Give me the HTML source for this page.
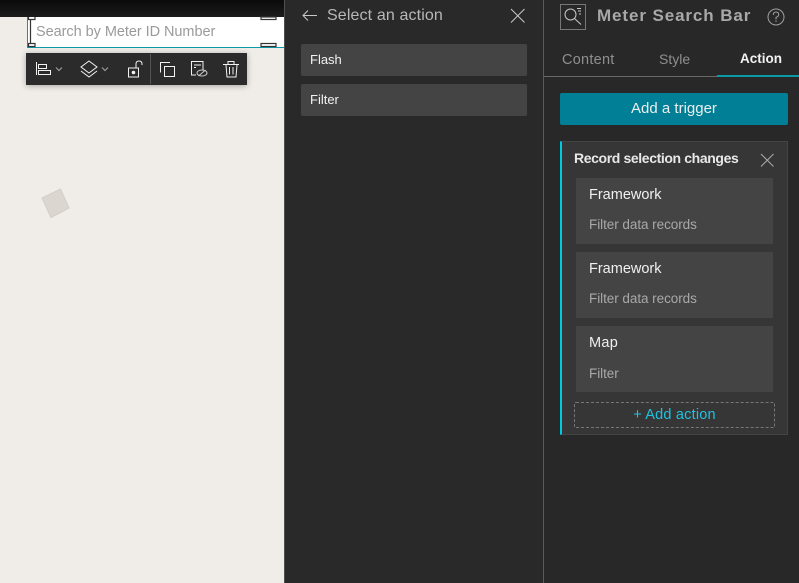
<!DOCTYPE html>
<html><head><meta charset="utf-8">
<style>
html,body{margin:0;padding:0;width:799px;height:583px;overflow:hidden;background:#282828;font-family:"Liberation Sans",sans-serif}
div{position:absolute;box-sizing:border-box;white-space:nowrap}
svg{position:absolute;overflow:visible}
.card{left:576px;width:197px;height:66px;background:#444}
.t{left:589px;font-size:14.500px;color:#f0f0f0;line-height:18px}
.s{left:589px;font-size:13.500px;color:#a8a8a8;line-height:18px;letter-spacing:-.05px}
</style></head><body>
<div style="left:0;top:0;width:284px;height:583px;background:#f0ede8"></div>
<div style="left:0;top:0;width:284px;height:17px;background:linear-gradient(#0a0a0a,#1b1b1b)"></div>
<div style="left:27px;top:17px;width:257px;height:31px;background:#fff;border-left:1px solid #0d9aa8;border-bottom:1px solid #0d9aa8"></div>
<div style="left:36px;top:23px;font-size:14.500px;line-height:18px;color:#9a9a9a;letter-spacing:-.05px">Search by Meter ID Number</div>
<svg style="left:0;top:0" width="284" height="50" fill="#fff" stroke="#333" stroke-width="1.200"><path d="M28.500 17v2.500h6.500V17M30.500 19.500v24" fill="none"/><rect x="28.500" y="43.500" width="6.500" height="3" /><rect x="261" y="17" width="15" height="2.500"/><rect x="261" y="43.500" width="15" height="3"/></svg>
<div style="left:26px;top:53px;width:221px;height:32px;background:#2b2b2b;box-shadow:0 1px 6px rgba(0,0,0,.3)"></div>
<div style="left:150px;top:54px;width:1px;height:30px;background:#555"></div>
<svg style="left:26px;top:53px" width="221" height="32" fill="none" stroke="#f2f2f2" stroke-width="1">
<path d="M10.500 9v13M12.500 11.500h8v4h-8zM12.500 17.500h12v4h-12z"/>
<path d="M30 14.500l3 3 3-3M76 14.500l3 3 3-3" stroke="#999" stroke-width="1.200"/>
<path d="M63 8l8 6-8 6-8-6zM55 18l8 6 8-6"/>
<path d="M102.500 15h10v9h-10zM110 15v-4q0-3 3-3t3 3v1"/><circle cx="107.500" cy="19.500" r="1.300" fill="#f2f2f2"/>
<path d="M134.500 19.500V9.500h9.500M138.500 13.500h10v10h-10z"/>
<path d="M177 17V8.500H165.500V22H170M168 12h7M168 14.500h2"/><ellipse cx="176" cy="20" rx="5" ry="3" stroke="#ccc"/><path d="M172.500 23l7-6" stroke="#ccc"/>
<path d="M197 11.500h16M200 12l1 12h9l1-12M202 11V8.500h6V11M203.500 14v7.500M207 14v7.500"/>
</svg>
<svg style="left:0;top:170px" width="100" height="60"><polygon points="60.500,19 69,38 51,47.500 42,28" fill="#dcd6d0" stroke="#d3cdc7"/></svg>
<div style="left:284px;top:0;width:1px;height:583px;background:#4f4f4f"></div>
<div style="left:285px;top:0;width:258px;height:583px;background:#292929"></div>
<div style="left:543px;top:0;width:1px;height:583px;background:#5a5a5a"></div>
<svg style="left:285px;top:0" width="258" height="30" fill="none" stroke="#c8c8c8" stroke-width="1"><path d="M18 15.500h14M23 10.500l-5 5 5 5"/><path d="M226 9l13.500 13.500M239.500 9L226 22.500"/></svg>
<div style="left:327px;top:6px;font-size:16px;line-height:20px;color:#b8b8b8;letter-spacing:.13px">Select an action</div>
<div style="left:301px;top:44px;width:226px;height:32px;background:#444;border-radius:2px"></div>
<div style="left:310px;top:51px;font-size:13px;line-height:18px;color:#f2f2f2">Flash</div>
<div style="left:301px;top:84px;width:226px;height:32px;background:#444;border-radius:2px"></div>
<div style="left:310px;top:91px;font-size:13px;line-height:18px;color:#f2f2f2">Filter</div>
<svg style="left:560px;top:4px" width="26" height="26" fill="none" stroke="#c8c8c8" stroke-width="1"><rect x=".5" y=".5" width="25" height="25" stroke="#777"/><circle cx="10.500" cy="10.500" r="5.500"/><path d="M14.500 14.500l6.500 6M17 4.500h4M18 7h3M19 10h2"/></svg>
<div style="left:597px;top:6px;font-size:17px;font-weight:bold;line-height:20px;color:#a8a8a8;letter-spacing:.9px">Meter Search Bar</div>
<svg style="left:767px;top:8px" width="18" height="18" fill="none" stroke="#a0a0a0"><circle cx="9" cy="9" r="8"/><path d="M6.300 7q0-3 2.700-3t2.700 2.700q0 1.600-2.700 2.800v2M9 12.500V14"/></svg>
<div style="left:562px;top:51px;font-size:14.500px;line-height:18px;color:#8f8f8f;letter-spacing:.25px">Content</div>
<div style="left:659px;top:50px;font-size:14px;line-height:18px;color:#8f8f8f">Style</div>
<div style="left:740px;top:50px;font-size:13.500px;font-weight:bold;line-height:18px;color:#f2f2f2">Action</div>
<div style="left:544px;top:76px;width:173px;height:1px;background:#6a6a6a"></div>
<div style="left:717px;top:75px;width:82px;height:2px;background:#0d9aa8"></div>
<div style="left:560px;top:93px;width:228px;height:32px;background:#007f96;border-radius:2px;text-align:center;font-size:15px;line-height:32px;color:#eee">Add a trigger</div>
<div style="left:560px;top:141px;width:228px;height:294px;background:#363636;border:1px solid #444;border-left:2px solid #00c9e0"></div>
<div style="left:574px;top:149px;font-size:14px;font-weight:bold;line-height:18px;color:#e8e8e8;letter-spacing:-.38px">Record selection changes</div>
<svg style="left:761px;top:154px" width="13" height="13" fill="none" stroke="#aaa"><path d="M0 0l12.500 12.500M12.500 0L0 12.500"/></svg>
<div class="card" style="top:178px"></div><div class="t" style="top:186px">Framework</div><div class="s" style="top:216px">Filter data records</div>
<div class="card" style="top:252px"></div><div class="t" style="top:260px">Framework</div><div class="s" style="top:290px">Filter data records</div>
<div class="card" style="top:326px"></div><div class="t" style="top:334px;letter-spacing:.3px">Map</div><div class="s" style="top:365px">Filter</div>
<div style="left:574px;top:402px;width:201px;height:26px;border:1px dashed #777;border-radius:2px;text-align:center;font-size:14.500px;line-height:25px;color:#1cc4e0;letter-spacing:.2px">+ Add action</div>
</body></html>
